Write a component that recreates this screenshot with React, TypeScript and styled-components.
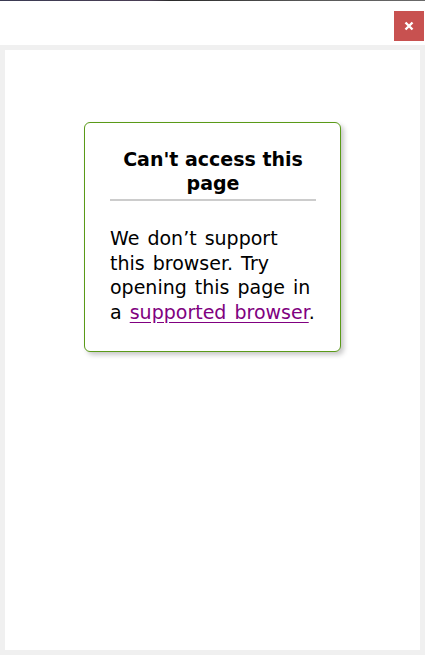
import React from "react";
import styled, { createGlobalStyle } from "styled-components";

const Global = createGlobalStyle`
  html, body { margin: 0; padding: 0; background: #f0f0f0; }
  body { font-family: "DejaVu Sans", Verdana, sans-serif; }
`;

const Page = styled.div`
  width: 425px;
  height: 655px;
  display: flex;
  flex-direction: column;
  background: #f0f0f0;
  overflow: hidden;
`;

const TopStrip = styled.div`
  height: 1px;
  background: linear-gradient(90deg, #3a3a52 0%, #4a3e55 35%, #2a2a2a 40%, #555 70%, #6a6a6a 100%);
`;

const Header = styled.div`
  height: 44px;
  background: #ffffff;
  display: flex;
  justify-content: flex-end;
  align-items: flex-start;
  padding-top: 10px;
  box-sizing: border-box;
`;

const CloseButton = styled.button`
  width: 30px;
  height: 30px;
  margin-right: 1px;
  border: none;
  padding: 0;
  background: #c85150;
  color: #fff;
  display: flex;
  align-items: center;
  justify-content: center;
  cursor: pointer;
`;

const Body = styled.div`
  flex: 1;
  padding: 5px 5px 5px 5px;
  display: flex;
`;

const Panel = styled.div`
  flex: 1;
  background: #ffffff;
  display: flex;
  justify-content: center;
  align-items: flex-start;
  padding-top: 72px;
`;

const Card = styled.div`
  width: 257px;
  box-sizing: border-box;
  border: 1px solid #5a9a18;
  border-radius: 6px;
  background: #fff;
  box-shadow: 3px 3px 5px rgba(0, 0, 0, 0.22);
  padding: 24px 23px 27px 25px;
`;

const Title = styled.h1`
  margin: 0 1px 0 0;
  font-size: 19px;
  line-height: 24px;
  font-weight: bold;
  text-align: center;
  color: #000;
  padding-bottom: 4px;
  border-bottom: 2px solid #cccccc;
`;

const Message = styled.p`
  margin: 25px 0 0 0;
  font-size: 19px;
  word-spacing: 2px;
  line-height: 24.5px;
  color: #000;
`;

const Link = styled.a`
  color: #800080;
  text-decoration: underline;
  text-underline-offset: 3px;
`;

export default function App() {
  return (
    <>
      <Global />
      <Page>
        <TopStrip />
        <Header>
          <CloseButton aria-label="Close">
            <svg width="10" height="10" viewBox="0 0 10 10">
              <path d="M1.5 1.5 L8.5 8.5 M8.5 1.5 L1.5 8.5" stroke="#fff" strokeWidth="2.4" />
            </svg>
          </CloseButton>
        </Header>
        <Body>
          <Panel>
            <Card>
              <Title>Can't access this page</Title>
              <Message>
                We don’t support this browser. Try opening this page in a{" "}
                <Link href="#">supported browser</Link>.
              </Message>
            </Card>
          </Panel>
        </Body>
      </Page>
    </>
  );
}
